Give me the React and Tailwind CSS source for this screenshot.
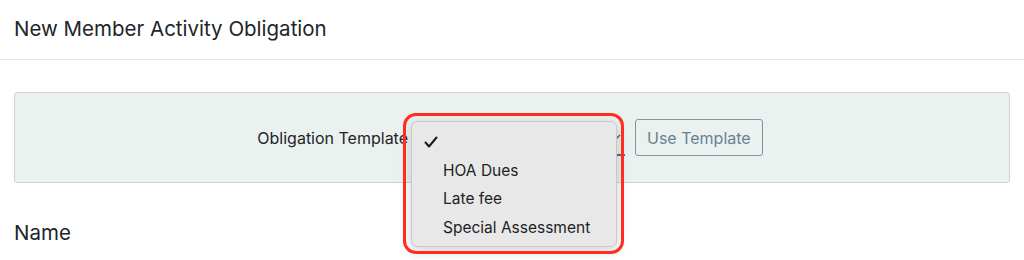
import React from "react";

export default function App() {
  return (
    <div className="relative w-[1024px] h-[260px] overflow-hidden bg-white text-[#212529]" style={{ fontFamily: "Inter, 'Noto Sans', sans-serif" }}>
      <div className="h-[60px] border-b border-[#e3e8e6] flex items-center px-[14px]">
        <h1 className="text-[20.5px] leading-none font-normal text-[#212529]">New Member Activity Obligation</h1>
      </div>
      <div className="mx-[14px] mt-[32px] h-[91px] rounded-[3px] border border-[#cdd3d0] bg-[#ebf1ee] flex items-center justify-center gap-[10px] pr-[4px]">
        <span className="text-[16px] text-[#212529]">Obligation Template</span>
        <div className="relative w-[207px] h-[36px] border-b-2 border-[#3b6fb6] flex items-center justify-end pr-[4px]">
          <svg width="10" height="6" viewBox="0 0 10 6" className="text-[#555]">
            <path d="M1 1l4 4 4-4" fill="none" stroke="currentColor" strokeWidth="1.3" />
          </svg>
        </div>
        <button className="h-[37px] px-[11px] rounded-[3px] border border-[#7f93a8] text-[16px] text-[#6a7f96] bg-transparent">Use Template</button>
      </div>
      <div className="px-[14px] mt-[35px]">
        <span className="text-[20.5px] text-[#212529]">Name</span>
      </div>

      {/* dropdown menu overlay */}
      <div className="absolute left-[411px] top-[121px] w-[206px] h-[126px] rounded-[6px] border border-[#c9c9c9] bg-[#e8e8e8] shadow-[0_4px_14px_rgba(0,0,0,0.18)] pt-[6px] text-[15.5px] text-[#222]">
        <div className="h-[28px] flex items-center pl-[12px]">
          <svg width="14" height="12" viewBox="0 0 14 12">
            <path d="M1.5 6.5l3.5 4L12.5 1.5" fill="none" stroke="#1a1a1a" strokeWidth="2" strokeLinecap="round" strokeLinejoin="round" />
          </svg>
        </div>
        <div className="h-[28.5px] flex items-center pl-[31px]">HOA Dues</div>
        <div className="h-[28.5px] flex items-center pl-[31px]">Late fee</div>
        <div className="h-[28.5px] flex items-center pl-[31px]">Special Assessment</div>
      </div>

      {/* red annotation outline */}
      <div className="absolute left-[403px] top-[113px] w-[221px] h-[141px] rounded-[13px] border-[3px] border-[#ff2d20] pointer-events-none" />
    </div>
  );
}
